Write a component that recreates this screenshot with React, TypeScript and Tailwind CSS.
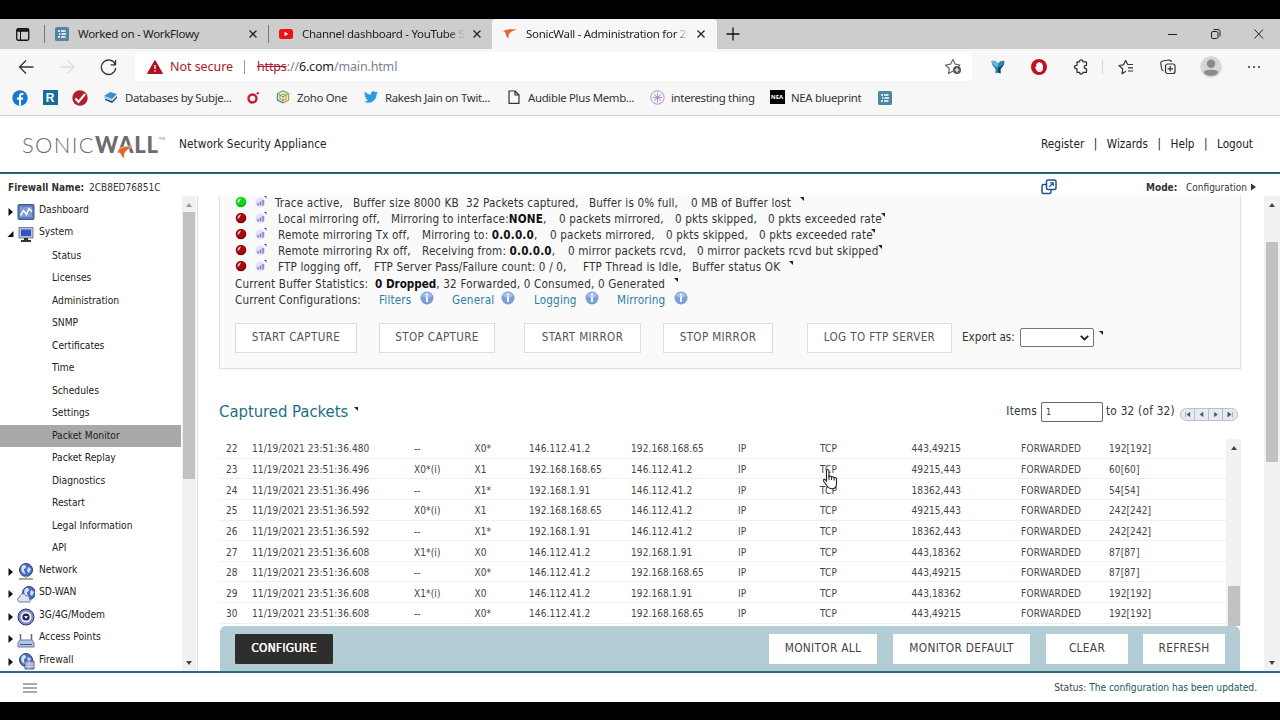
import type { ReactNode } from 'react'

/** Small folded-corner mark that flags a tooltip. */
function Tip({ className = '' }: { className?: string }) {
  return (
    <svg width="4" height="4" viewBox="0 0 4 4" className={`shrink-0 ${className}`} aria-hidden>
      <path d="M0 0h4v4z" fill="#222" />
    </svg>
  )
}

function Close() {
  return (
    <svg width="8" height="8" viewBox="0 0 8 8" stroke="#222" strokeWidth="1.3" className="shrink-0" aria-hidden>
      <path d="M.5.5l7 7M7.5.5l-7 7" />
    </svg>
  )
}

function WorkflowyIcon() {
  return (
    <svg width="14" height="14" viewBox="0 0 14 14" className="shrink-0" aria-hidden>
      <rect width="14" height="14" rx="1.5" fill="#4f87a3" />
      <path d="M3 4h2M6 4h4.500M4 7h1.500M6.500 7H11M3 10h2M6 10h4.500" stroke="#fff" strokeWidth="1.400" />
    </svg>
  )
}

function SonicSwoosh() {
  return (
    <svg width="14" height="10" viewBox="0 0 14 10" className="shrink-0" aria-hidden>
      <path d="M14 0.6C8-.4 2 .4 0 2.600c1.600 0 2.400.6 2.600 2.200.2 1.800 1.200 3.700 3.400 4.800C4.400 6 6.500 2.500 14 .6z" fill="#e0662d" />
    </svg>
  )
}

function TabStrip() {
  return (
    <div className="flex h-[30px] shrink-0 items-center bg-[#cdcdcd] text-[11.5px] tracking-[-0.3px] text-[#222]">
      <svg width="14" height="13" viewBox="0 0 14 13" className="ml-[16px]" fill="none" stroke="#111" aria-hidden>
        <rect x=".75" y=".75" width="12" height="11.500" rx="1.500" strokeWidth="1.300" />
        <path d="M1 2.500h12" strokeWidth="2.500" />
        <path d="M4.500 3v9" />
      </svg>
      <span className="ml-[14px] h-[18px] w-px bg-[#777]" />
      <span className="ml-[10px] flex">
        <WorkflowyIcon />
      </span>
      <span className="ml-[9px] w-[171px] whitespace-nowrap">Worked on - WorkFlowy</span>
      <Close />
      <span className="ml-[11px] h-[18px] w-px bg-[#777]" />
      <svg width="14" height="10" viewBox="0 0 14 10" className="ml-[10px] shrink-0" aria-hidden>
        <rect width="14" height="10" rx="2.500" fill="#e11" />
        <path d="M5.500 2.800v4.400L9.200 5z" fill="#fff" />
      </svg>
      <span className="ml-[9px] w-[163px] whitespace-nowrap [mask-image:linear-gradient(to_right,black_90%,transparent)]">
        Channel dashboard - YouTube St
      </span>
      <span className="ml-[8px] flex">
        <Close />
      </span>
      <div className="ml-[11px] flex h-[30px] w-[225px] items-center rounded-t-[4px] bg-[#f7f7f7] pl-[11px]">
        <SonicSwoosh />
        <span className="ml-[9px] w-[162px] whitespace-nowrap [mask-image:linear-gradient(to_right,black_92%,transparent)]">
          SonicWall - Administration for 20
        </span>
        <span className="ml-[9px] flex">
          <Close />
        </span>
      </div>
      <svg width="14" height="14" viewBox="0 0 14 14" stroke="#111" strokeWidth="1.300" className="ml-[9px]" aria-hidden>
        <path d="M7 .5v13M.5 7h13" />
      </svg>
      <svg width="97" height="12" viewBox="0 0 97 12" fill="none" stroke="#222" className="mr-[16px] ml-auto" aria-hidden>
        <path d="M1 6.500h9M87.500 1.500l8.500 9M96 1.500l-8.500 9" />
        <rect x="44.500" y="3.500" width="6.500" height="7" rx="1.500" />
        <path d="M46.500 1.500h4.500q2 0 2 2v5" />
      </svg>
    </div>
  )
}

function Toolbar() {
  return (
    <div className="flex h-[35px] shrink-0 items-center bg-[#f7f7f7]">
      <svg width="100" height="18" viewBox="0 0 100 18" fill="none" stroke="#333" strokeWidth="1.300" className="ml-[18px] shrink-0" aria-hidden>
        <path d="M15.500 9H1.500M8 2.500L1.500 9 8 15.500" />
        <path d="M42 9h14M49.500 2.500L56 9l-6.500 6.500" stroke="#ddd" />
        <path d="M97.200 6.500A7.200 7.200 0 1 0 97.700 10M97.500 2v4.800h-4.800" />
      </svg>
      <div className="ml-[17px] flex h-[29px] w-[837px] shrink-0 items-center rounded-[3px] bg-white pl-[12px]">
        <svg width="16" height="14" viewBox="0 0 16 14" aria-hidden>
          <path d="M8 .5l7.500 13H.5z" fill="#b01020" stroke="#b01020" strokeLinejoin="round" />
          <path d="M8 5v4M8 10.300v1.500" stroke="#fff" strokeWidth="1.300" />
        </svg>
        <span className="ml-[7px] w-[63px] pt-[2px] whitespace-nowrap text-[12.5px] tracking-[-0.05px] text-[#a8202c]">Not secure</span>
        <span className="ml-[11px] h-[14px] w-px bg-[#999]" />
        <span className="ml-[12px] pt-[2px] whitespace-nowrap text-[12.5px] tracking-[-0.15px] text-[#7a8290]">
          <span className="text-[#a8202c] line-through">https</span>://<span className="text-[#222]">6.com</span>/main.html
        </span>
        <svg width="18" height="17" viewBox="0 0 18 17" fill="none" stroke="#666" strokeWidth="1.200" className="mr-[10px] ml-auto" aria-hidden>
          <path d="M9 13l-4.500 2.500.8-5L1.500 7l5-.8L9 1.500l2.300 4.700 4.500.8-1.500 1.500" strokeLinejoin="round" />
          <circle cx="13" cy="12" r="4" fill="#555" stroke="none" />
          <path d="M13 9.800v4.400M10.800 12h4.400" stroke="#fff" />
        </svg>
      </div>
      <div className="flex flex-1 items-center">
        <svg width="14" height="14" viewBox="0 0 14 14" className="ml-[19px] shrink-0" aria-hidden>
          <path d="M.5 1C3 .2 5.500 1 7 3.800 8.500 1 11 .2 13.500 1 13.500 4 11.500 7 9.500 9v4.500L7 12.500l-2.500 1V9C2.500 7 .5 4 .5 1z" fill="#2786b8" />
          <path d="M.5 1C3 .2 5.500 1 7 3.800V7C4 7 1.500 4.500.5 1z" fill="#6db4d8" />
          <path d="M13.500 1C13 4.500 10 7.500 7 7.500v5l2.500 1V9c2-2 4-5 4-8z" fill="#173f63" />
        </svg>
        <svg width="16" height="16" viewBox="0 0 16 16" className="ml-[26px] shrink-0" aria-hidden>
          <circle cx="8" cy="8" r="8" fill="#c50f1f" />
          <path d="M4 7.500l1.300.8V4.500h1.300V3.400h1.400V3h1.400v1h1.500v1.500h1V9.500c0 2-1.200 3.500-3.300 3.500C6.300 13 5 11.500 4 7.500z" fill="#fff" />
        </svg>
        <svg width="16" height="16" viewBox="0 0 16 16" fill="none" stroke="#333" strokeWidth="1.300" className="ml-[26px] shrink-0" aria-hidden>
          <path d="M4 2.800h2.500c0-2.600 3.500-2.600 3.500 0h3.500v3.500c-3 0-3 3.600 0 3.600v3.400H10c0 2.400-3.500 2.400-3.500 0H4V9.900C.6 9.900.6 6.300 4 6.300z" strokeLinejoin="round" />
        </svg>
        <span className="ml-[13px] h-[14px] w-px bg-[#d5d5d5]" />
        <svg width="16" height="16" viewBox="0 0 16 16" fill="none" stroke="#333" strokeWidth="1.200" className="ml-[15px] shrink-0" aria-hidden>
          <path d="M8 12.300L4 14.800l.8-4.800L1 6.500l4.500-.7L7.700 1.500l2 4H15M10 8.800h5M10 12h5" strokeLinejoin="round" />
        </svg>
        <svg width="16" height="16" viewBox="0 0 16 16" fill="none" stroke="#333" strokeWidth="1.200" className="ml-[26px] shrink-0" aria-hidden>
          <rect x="5.500" y="5" width="9.500" height="9.500" rx="2" />
          <path d="M10.200 7v5.500M7.500 9.800H13M3.500 12Q2 11.500 1.700 10L.8 4.500Q.6 2.500 2.500 2L9 1q2 0 2.500 2" />
        </svg>
        <svg width="22" height="22" viewBox="0 0 22 22" className="ml-[24px] shrink-0" aria-hidden>
          <circle cx="11" cy="11" r="10.700" fill="#d8d6d4" />
          <circle cx="11" cy="7.800" r="4.200" fill="#8c8a88" />
          <path d="M4 16c0-3 14-3 14 0 0 5-14 5-14 0z" fill="#8c8a88" />
        </svg>
        <svg width="14" height="4" viewBox="0 0 14 4" fill="#333" className="ml-[25px] shrink-0" aria-hidden>
          <circle cx="2" cy="2" r="1" />
          <circle cx="7" cy="2" r="1" />
          <circle cx="12" cy="2" r="1" />
        </svg>
      </div>
    </div>
  )
}

function Bookmark({ icon, label, className }: { icon: ReactNode; label?: string; className: string }) {
  return (
    <div className={`flex shrink-0 items-center whitespace-nowrap ${className}`}>
      <span className="flex w-[16px] shrink-0 justify-center">{icon}</span>
      {label && <span className="ml-[6px] pt-px">{label}</span>}
    </div>
  )
}

function BookmarksBar() {
  return (
    <div className="flex h-[32px] shrink-0 items-center border-b border-[#cfcfcf] bg-[#f7f7f7] pb-[4px] pl-[12px] text-[11.4px] tracking-[-0.32px] text-[#333]">
      <Bookmark
        className="w-[30px]"
        icon={
          <svg width="16" height="16" viewBox="0 0 16 16" aria-hidden>
            <circle cx="8" cy="8" r="7.700" fill="#1877d2" />
            <path d="M7 15.500V9.800H5V7.600h2V6c0-2 1.200-3 3-3h1.300v2h-1C9.300 5 9 5.500 9 6.300v1.300h2.200l-.4 2.200H9v5.700z" fill="#fff" />
          </svg>
        }
      />
      <Bookmark
        className="w-[30px]"
        icon={
          <span className="flex h-[15px] w-[15px] items-center justify-center bg-[#156d9c] font-['Liberation_Sans',sans-serif] text-[12px] leading-none font-bold text-white">
            R
          </span>
        }
      />
      <Bookmark
        className="w-[31px]"
        icon={
          <svg width="16" height="16" viewBox="0 0 16 16" aria-hidden>
            <circle cx="8" cy="8" r="7.700" fill="#b31f30" />
            <path d="M3.500 8.500l3 3.500 6.500-8" stroke="#fff" strokeWidth="2" fill="none" />
          </svg>
        }
      />
      <Bookmark
        className="w-[142px]"
        label="Databases by Subje..."
        icon={
          <svg width="14" height="12" viewBox="0 0 14 12" aria-hidden>
            <path d="M0 5l6-4 7 2-5 5z" fill="#3f8fc6" />
            <path d="M1 7.500l7 2.500 5-5v2L8 12 1 9z" fill="#1e4f86" />
            <path d="M0 5l8 3v2L0 7z" fill="#a9d2ea" />
          </svg>
        }
      />
      <Bookmark
        className="w-[30px]"
        icon={
          <svg width="14" height="14" viewBox="0 0 14 14" aria-hidden>
            <circle cx="6.500" cy="7.500" r="4" fill="none" stroke="#c8203c" strokeWidth="2.400" />
            <circle cx="11.800" cy="2.300" r="1.200" fill="#c8203c" />
          </svg>
        }
      />
      <Bookmark
        className="w-[88px]"
        label="Zoho One"
        icon={
          <svg width="14" height="14" viewBox="0 0 14 14" fill="none" strokeWidth="1.300" aria-hidden>
            <path d="M1.500 3.500L7 1l5.500 2.500" stroke="#6cb04a" />
            <path d="M1.500 3.500v6.500L7 13" stroke="#2f87c8" />
            <path d="M12.500 3.500v6.500L7 13" stroke="#b9a33a" />
            <path d="M4 5.500l3-1.500 3 1.500v3.500L7 10.500 4 9z" stroke="#e0a030" />
            <path d="M1.500 3.500L7 6.800l5.500-3.300M7 6.800V13" stroke="#5aa05a" strokeWidth=".9" />
          </svg>
        }
      />
      <Bookmark
        className="w-[143px]"
        label="Rakesh Jain on Twit..."
        icon={
          <svg width="14" height="12" viewBox="0 0 24 20" fill="#2a9ddf" aria-hidden>
            <path d="M24 2.400a10 10 0 0 1-2.800.8A5 5 0 0 0 23.300.500a10 10 0 0 1-3.100 1.200 4.900 4.900 0 0 0-8.400 4.500A14 14 0 0 1 1.700 1a4.900 4.900 0 0 0 1.500 6.600A5 5 0 0 1 1 7v.1a4.900 4.900 0 0 0 3.900 4.800 5 5 0 0 1-2.200.1 4.900 4.900 0 0 0 4.600 3.400A9.900 9.900 0 0 1 0 17.500a14 14 0 0 0 7.500 2.200c9.100 0 14-7.500 14-14v-.6A10 10 0 0 0 24 2.400z" />
          </svg>
        }
      />
      <Bookmark
        className="w-[143px]"
        label="Audible Plus Memb..."
        icon={
          <svg width="12" height="14" viewBox="0 0 12 14" fill="none" stroke="#333" strokeWidth="1.200" aria-hidden>
            <path d="M1 1h6l4 4v8.400H1zM7 1v4h4" strokeLinejoin="round" />
          </svg>
        }
      />
      <Bookmark
        className="w-[120px]"
        label="interesting thing"
        icon={
          <svg width="15" height="15" viewBox="0 0 15 15" fill="none" stroke="#b48fcb" aria-hidden>
            <circle cx="7.500" cy="7.500" r="6.700" />
            <path d="M7.500 2.500v10M4 4.500l3.500 3 3.500-3M4 10.500l3.500-3 3.500 3M3 7.500h9" />
          </svg>
        }
      />
      <Bookmark
        className="w-[108px]"
        label="NEA blueprint"
        icon={
          <span className="flex h-[14px] w-[15px] items-center justify-center bg-black text-[6px] font-bold tracking-normal text-white">NEA</span>
        }
      />
      <Bookmark className="w-[20px]" icon={<WorkflowyIcon />} />
    </div>
  )
}

function PageHeader() {
  return (
    <div className="flex h-[58px] shrink-0 items-center border-b-2 border-[#1d6474] bg-white pt-[2px] text-[11.7px] text-[#222]">
      <div className="relative ml-[22px] flex w-[157px] items-center font-['Lato',sans-serif] text-[22px] leading-none text-[#6b6b6d]">
        <span className="w-[73px] font-light tracking-[1.3px]">SONIC</span>
        <span className="font-black tracking-[0.8px]">WALL</span>
        <span className="mb-[12px] text-[4px]">TM</span>
        <svg width="18" height="14" viewBox="0 0 18 14" className="absolute top-[11px] left-[94px]" aria-hidden>
          <path d="M17.500 1C10 .500 3 2.500 1 6.500c2 .2 3 1 3.500 2.500.600 2 2 3.500 4.500 4.500C7 9 9 5.500 17.500 1z" fill="#e0662d" stroke="#fff" strokeWidth=".6" />
        </svg>
      </div>
      <span className="whitespace-nowrap tracking-[0.08px]">Network Security Appliance</span>
      <div className="mr-[27px] ml-auto flex w-[212px] justify-between whitespace-nowrap">
        <span>Register</span>
        <span>|</span>
        <span>Wizards</span>
        <span>|</span>
        <span>Help</span>
        <span>|</span>
        <span>Logout</span>
      </div>
    </div>
  )
}

function ModeBar() {
  return (
    <div className="flex h-[22px] shrink-0 items-center pt-[4px] text-[10px] whitespace-nowrap text-[#333]">
      <span className="ml-[8px] w-[81px] font-bold">Firewall Name:</span>
      <span>2CB8ED76851C</span>
      <svg width="16" height="16" viewBox="0 0 16 16" fill="#fff" stroke="#214f9a" strokeWidth="1.500" className="ml-auto" aria-hidden>
        <rect x="1" y="5.500" width="9" height="9" rx="1.500" />
        <rect x="5.500" y="1" width="9.500" height="9.500" rx="1.500" />
        <path d="M8 8l4-4M9 3.700h3.300V7" strokeWidth="1.100" />
      </svg>
      <span className="ml-[89px] w-[40px] font-bold">Mode:</span>
      <span className="w-[65px]">Configuration</span>
      <svg width="6" height="8" viewBox="0 0 6 8" className="mr-[23px] shrink-0" aria-hidden>
        <path d="M0 .5l5 3.500-5 3.500z" fill="#333" />
      </svg>
    </div>
  )
}

function Globe() {
  return (
    <>
      <circle cx="9" cy="7" r="6.500" fill="#4a6fc4" stroke="#2c3f7c" />
      <path d="M5 3c2-2 4-1 4 1s-2 1-2 3 2 2 1 4C5 10 3 7 5 3zM11 4l3 2-2 4-2-2z" fill="#d5e2fa" />
    </>
  )
}

const NAV_ICONS: Record<string, ReactNode> = {
  Dashboard: (
    <>
      <rect x="1" y="1.500" width="16" height="15" rx="1" fill="#5d7fbd" stroke="#3c578f" />
      <path d="M3 4h12v10H3z" fill="#7f9dd2" />
      <path d="M3.500 12.500l3-5 3 4 2.500-6 3 3" stroke="#fff" strokeWidth="1.500" fill="none" />
    </>
  ),
  System: (
    <>
      <rect x="2" y="1.500" width="14" height="10.500" fill="#b8c2d6" stroke="#76809a" />
      <rect x="4" y="3.500" width="10" height="6.500" fill="#2d57c4" />
      <path d="M7 12h4v2h3v2H4v-2h3z" fill="#333" />
    </>
  ),
  Network: (
    <>
      <Globe />
      <path d="M8 13h2v2h6v2H2v-2h6z" fill="#a9ab98" />
    </>
  ),
  'SD-WAN': (
    <>
      <g transform="translate(3 0)">
        <Globe />
      </g>
      <path d="M3 16c-3 0-3-5 0-5 0-4 5-4 6-1 3-1 4 2 3 3 2 0 2 3 0 3z" fill="#dde5f2" stroke="#66759b" />
    </>
  ),
  '3G/4G/Modem': (
    <>
      <circle cx="9" cy="9" r="8" fill="#7c89c4" stroke="#2f3a70" />
      <circle cx="9" cy="9" r="5.500" fill="#e8ecf8" />
      <circle cx="9" cy="9" r="3.600" fill="#20274f" />
      <path d="M7 8h4l-2 3z" fill="#eee" />
    </>
  ),
  'Access Points': (
    <>
      <path d="M3.500 3v8M14.500 3v8" stroke="#5b6791" strokeWidth="1.500" />
      <path d="M1 12l2-3h12l2 3v4H1z" fill="#b5c4e6" stroke="#6a78a5" />
      <path d="M3 13.500h12" stroke="#42518a" />
    </>
  ),
  Firewall: (
    <>
      <Globe />
      <path d="M8 8h9v8H8z" fill="#9aa8cf" stroke="#505f93" />
      <path d="M8 11h9M8 13.500h9M12 8v8" stroke="#dfe5f5" strokeWidth=".7" />
    </>
  ),
}

function NavGroup({ label, open }: { label: string; open?: boolean }) {
  return (
    <div className="flex h-[22.5px] shrink-0 items-center">
      <svg width="7" height="8" viewBox="0 0 7 8" className="mt-[2px] ml-[7px] shrink-0" aria-hidden>
        <path d={open ? 'M6.500 1v6H.5z' : 'M1.500 0l4.500 4-4.500 4z'} fill="#111" />
      </svg>
      <svg width="18" height="18" viewBox="0 0 18 18" className="mt-[3px] ml-[3px] shrink-0" aria-hidden>
        {NAV_ICONS[label]}
      </svg>
      <span className="mb-[3px] ml-[4px]">{label}</span>
    </div>
  )
}

const SYSTEM_ITEMS = [
  'Status',
  'Licenses',
  'Administration',
  'SNMP',
  'Certificates',
  'Time',
  'Schedules',
  'Settings',
  'Packet Monitor',
  'Packet Replay',
  'Diagnostics',
  'Restart',
  'Legal Information',
  'API',
]

function Arrow({ down, color = '#444' }: { down?: boolean; color?: string }) {
  return (
    <svg width="8" height="4" viewBox="0 0 8 4" className="shrink-0" aria-hidden>
      <path d={down ? 'M1 0h6L4 4z' : 'M1 4h6L4 0z'} fill={color} />
    </svg>
  )
}

function Sidebar() {
  return (
    <div className="flex w-[198px] shrink-0 border-r border-[#dcdcdc]">
      <div className="flex h-full w-[181px] flex-col overflow-hidden pt-[3.5px] text-[10.2px] whitespace-nowrap text-[#222]">
        <NavGroup label="Dashboard" />
        <NavGroup label="System" open />
        {SYSTEM_ITEMS.map((item) => (
          <div
            key={item}
            className={`flex h-[22.5px] shrink-0 items-center pb-px pl-[52px] ${item === 'Packet Monitor' ? 'bg-[#a9a9a9]' : ''}`}
          >
            {item}
          </div>
        ))}
        <NavGroup label="Network" />
        <NavGroup label="SD-WAN" />
        <NavGroup label="3G/4G/Modem" />
        <NavGroup label="Access Points" />
        <NavGroup label="Firewall" />
      </div>
      <div className="ml-px flex w-[14px] flex-col items-center bg-[#f1f1f1] pt-[7px]">
        <Arrow color="#999" />
        <div className="mt-[5px] h-[267px] w-[12px] bg-[#c1c1c1]" />
        <div className="mt-auto mb-[6px] flex">
          <Arrow down />
        </div>
      </div>
    </div>
  )
}

function Led({ on }: { on?: boolean }) {
  return (
    <svg width="12" height="12" viewBox="0 0 12 12" className="shrink-0" aria-hidden>
      <circle cx="6" cy="6" r="5.300" fill={on ? '#12d51c' : '#a80812'} />
      <path d="M2.500 6c0-2 1.500-3.500 3.500-3.500L3.500 7z" fill={on ? '#d8ffd8' : '#f3c3c3'} />
      <path d="M3 9.500c3 1.500 6 0 7.500-3" stroke={on ? '#0a8f14' : '#5d0208'} fill="none" />
    </svg>
  )
}

function StatsIcon() {
  return (
    <svg width="12" height="12" viewBox="0 0 12 12" className="ml-[8px] shrink-0" aria-hidden>
      <circle cx="5.500" cy="6.500" r="5" fill="#e1e1f8" />
      <path d="M3 7v2.500M5.500 5.500v4M8 4v5.500" stroke="#7b80d0" strokeWidth="1.500" />
      <path d="M9 0h2.500v2.500z" fill="#555" />
    </svg>
  )
}

type Segment = [text: string, width: string, bold?: string]

const STATUS_LINES: { on?: boolean; indent: string; segments: Segment[] }[] = [
  {
    on: true,
    indent: 'ml-[8px]',
    segments: [
      ['Trace active,', 'w-[78px]'],
      ['Buffer size 8000 KB', 'w-[113px]'],
      ['32 Packets captured,', 'w-[123px]'],
      ['Buffer is 0% full,', 'w-[102px]'],
      ['0 MB of Buffer lost', 'w-[119px]'],
    ],
  },
  {
    indent: 'ml-[11px]',
    segments: [
      ['Local mirroring off,', 'w-[113px]'],
      ['Mirroring to interface:', 'w-[168px]', 'NONE'],
      ['0 packets mirrored,', 'w-[116px]'],
      ['0 pkts skipped,', 'w-[93px]'],
      ['0 pkts exceeded rate', 'w-[123px]'],
    ],
  },
  {
    indent: 'ml-[11px]',
    segments: [
      ['Remote mirroring Tx off,', 'w-[144px]'],
      ['Mirroring to: ', 'w-[128px]', '0.0.0.0'],
      ['0 packets mirrored,', 'w-[116px]'],
      ['0 pkts skipped,', 'w-[93px]'],
      ['0 pkts exceeded rate', 'w-[122px]'],
    ],
  },
  {
    indent: 'ml-[11px]',
    segments: [
      ['Remote mirroring Rx off,', 'w-[144px]'],
      ['Receiving from: ', 'w-[146px]', '0.0.0.0'],
      ['0 mirror packets rcvd,', 'w-[129px]'],
      ['0 mirror packets rcvd but skipped', 'w-[191px]'],
    ],
  },
  {
    indent: 'ml-[11px]',
    segments: [
      ['FTP logging off,', 'w-[96px]'],
      ['FTP Server Pass/Failure count: 0 / 0,', 'w-[209px]'],
      ['FTP Thread is Idle,', 'w-[109px]'],
      ['Buffer status OK', 'w-[107px]'],
    ],
  },
]

function Info({ className }: { className: string }) {
  return (
    <svg width="14" height="14" viewBox="0 0 14 14" className={`mb-[7px] shrink-0 ${className}`} aria-hidden>
      <circle cx="7" cy="7" r="6.500" fill="#7f9ed8" />
      <path d="M2 5a5.300 5.300 0 0 1 10 0c-3 2-7 2-10 0z" fill="#a9c0ea" />
      <path d="M7 2.500v2M7 5.500v5.500" stroke="#fff" strokeWidth="1.800" />
    </svg>
  )
}

function PanelButton({ children, className }: { children: string; className: string }) {
  return (
    <button className={`flex h-[30px] shrink-0 items-center justify-center whitespace-nowrap ${className}`}>{children}</button>
  )
}

function CapturePanel() {
  return (
    <div className="h-[173px] shrink-0 border border-t-0 border-[#e2e2e2] bg-[#fafafa] pl-[15px] text-[11.6px] tracking-[0.17px] text-[#333] shadow-xs">
      <div className="flex flex-col">
        {STATUS_LINES.map((line, i) => (
          <div key={i} className="flex h-[16px] items-center whitespace-nowrap">
            <span className="mb-[5px] flex">
              <Led on={line.on} />
              <StatsIcon />
            </span>
            <span className={line.indent} />
            {line.segments.map(([text, width, bold]) => (
              <span key={text} className={`shrink-0 whitespace-pre ${width}`}>
                {text}
                {bold && (
                  <>
                    <b className="text-[#111]">{bold}</b>,
                  </>
                )}
              </span>
            ))}
            <Tip className="mb-[10px] -ml-[10px]" />
          </div>
        ))}
        <div className="flex h-[17px] items-center whitespace-nowrap">
          <span className="w-[140px]">Current Buffer Statistics:</span>
          <b className="tracking-normal text-[#111]">0 Dropped</b>
          <span>, 32 Forwarded, 0 Consumed, 0 Generated</span>
          <Tip className="mb-[10px] ml-[9px]" />
        </div>
        <div className="flex h-[16px] items-center whitespace-nowrap text-[#2a7fa3]">
          <span className="w-[144px] text-[#333]">Current Configurations:</span>
          <span className="w-[41px]">Filters</span>
          <Info className="mr-[18px]" />
          <span className="w-[49px]">General</span>
          <Info className="mr-[19px]" />
          <span className="w-[51px]">Logging</span>
          <Info className="mr-[18px]" />
          <span className="w-[57px]">Mirroring</span>
          <Info className="" />
        </div>
      </div>
      <div className="mt-[14px] flex items-center text-[#555]">
        <PanelButton className="w-[122px] border border-[#ddd] bg-white tracking-[0.35px]">START CAPTURE</PanelButton>
        <PanelButton className="ml-[22px] w-[116px] border border-[#ddd] bg-white tracking-[0.35px]">STOP CAPTURE</PanelButton>
        <PanelButton className="ml-[29px] w-[117px] border border-[#ddd] bg-white tracking-[0.35px]">START MIRROR</PanelButton>
        <PanelButton className="ml-[22px] w-[110px] border border-[#ddd] bg-white tracking-[0.35px]">STOP MIRROR</PanelButton>
        <PanelButton className="ml-[34px] w-[145px] border border-[#ddd] bg-white tracking-[0.35px]">LOG TO FTP SERVER</PanelButton>
        <span className="ml-[10px] w-[58px] whitespace-nowrap tracking-normal text-[#333]">Export as:</span>
        <div className="mb-px flex h-[19px] w-[74px] items-center justify-end rounded-[2px] border border-[#767676] bg-white pr-[4px]">
          <svg width="9" height="6" viewBox="0 0 9 6" fill="none" stroke="#222" strokeWidth="1.900" aria-hidden>
            <path d="M.8.8L4.500 4.500 8.200.8" />
          </svg>
        </div>
        <Tip className="mb-[10px] ml-[5px]" />
      </div>
    </div>
  )
}

const PAGER = ['M4 1v5M9 1L5.500 3.500 9 6z', 'M8 1L4.500 3.500 8 6z', 'M5 1l3.500 2.500L5 6z', 'M9 1v5M4 1l3.500 2.500L4 6z']

function CapturedHeading() {
  return (
    <div className="mt-[32px] flex h-[22px] shrink-0 items-center whitespace-nowrap text-[#333]">
      <h2 className="text-[16.6px] tracking-[-0.05px] text-[#1f6f86]">Captured Packets</h2>
      <Tip className="mb-[7px] ml-[6px]" />
      <span className="mr-[4px] ml-auto text-[11.7px] tracking-[0.25px]">Items</span>
      <div className="flex h-[20px] w-[62px] items-center rounded-[2px] border border-[#666] bg-white pt-px pl-[4px] text-[9px]">1</div>
      <span className="ml-[3px] w-[74px] text-[11.7px] tracking-[0.25px]">to 32 (of 32)</span>
      <div className="mt-[4px] mr-[3px] flex h-[13px] w-[58px] overflow-hidden rounded-full border border-[#b9c0c8] bg-[#e6ebf1]">
        {PAGER.map((d) => (
          <svg key={d} width="14.500" height="11" viewBox="-1 -2 14.500 11" className="border-r border-[#b9c0c8] last:border-r-0" fill="#4a5566" stroke="#4a5566" strokeWidth=".5" aria-hidden>
            <path d={d} />
          </svg>
        ))}
      </div>
    </div>
  )
}

const PACKETS = [
  ['22', '480', '--', 'X0*', '146.112.41.2', '192.168.168.65', '443,49215', '192[192]'],
  ['23', '496', 'X0*(i)', 'X1', '192.168.168.65', '146.112.41.2', '49215,443', '60[60]'],
  ['24', '496', '--', 'X1*', '192.168.1.91', '146.112.41.2', '18362,443', '54[54]'],
  ['25', '592', 'X0*(i)', 'X1', '192.168.168.65', '146.112.41.2', '49215,443', '242[242]'],
  ['26', '592', '--', 'X1*', '192.168.1.91', '146.112.41.2', '18362,443', '242[242]'],
  ['27', '608', 'X1*(i)', 'X0', '146.112.41.2', '192.168.1.91', '443,18362', '87[87]'],
  ['28', '608', '--', 'X0*', '146.112.41.2', '192.168.168.65', '443,49215', '87[87]'],
  ['29', '608', 'X1*(i)', 'X0', '146.112.41.2', '192.168.1.91', '443,18362', '192[192]'],
  ['30', '608', '--', 'X0*', '146.112.41.2', '192.168.168.65', '443,49215', '192[192]'],
]

function PacketTable() {
  return (
    <div className="relative mt-[15px] flex h-[188px] shrink-0">
      <div className="flex-1 text-[10px] tracking-[0.1px] text-[#444]">
        {PACKETS.map(([id, ms, ingress, egress, src, dst, ports, size]) => (
          <div
            key={id}
            className="grid h-[20.65px] grid-cols-[26px_162px_60.5px_54.5px_102px_107px_82px_91.5px_109.5px_88px_1fr] items-center border-b border-[#efefef] pt-[2px] pl-[7px] whitespace-nowrap"
          >
            <span>{id}</span>
            <span>11/19/2021 23:51:36.{ms}</span>
            <span>{ingress}</span>
            <span>{egress}</span>
            <span>{src}</span>
            <span>{dst}</span>
            <span>IP</span>
            <span>TCP</span>
            <span>{ports}</span>
            <span className="tracking-[0.2px]">FORWARDED</span>
            <span>{size}</span>
          </div>
        ))}
      </div>
      <div className="mt-[1px] flex w-[15px] flex-col items-center bg-[#f1f1f1] pt-[7px]">
        <Arrow />
        <div className="mt-auto h-[40px] w-[12px] bg-[#c1c1c1]" />
      </div>
      {/* hand pointer over row 23 */}
      <svg width="18" height="22" viewBox="0 0 18 22" className="absolute top-[30px] left-[603px]" aria-hidden>
        <path
          d="M5.500 1.500c1.200 0 1.500.7 1.500 1.500v5.500c.8-.8 2.300-.5 2.600.5.800-.6 2.200-.3 2.500.7.900-.5 2.400 0 2.400 1.500v4.500c0 3-1.500 5-4.500 5-3 0-4-1-5.500-3.500L1.500 13c-.6-1.300.8-2.200 1.800-1.200L4.500 13V3c0-.8.200-1.500 1-1.500z"
          fill="#fff"
          stroke="#222"
          strokeWidth="1.100"
        />
        <path d="M7 8v4M9.600 9v3M12.100 9.500v3" stroke="#222" fill="none" />
      </svg>
    </div>
  )
}

function ActionBar() {
  return (
    <div className="mx-px flex h-[45px] shrink-0 items-center rounded-t-[6px] bg-[#b3cdd5] pr-[15px] pl-[15px] text-[11.800px] tracking-[0.3px] text-[#444]">
      <PanelButton className="w-[98px] rounded-[1px] bg-[#2e2e2e] pt-px text-white [text-shadow:0.4px_0_0_white]">CONFIGURE</PanelButton>
      <PanelButton className="ml-auto w-[108px] bg-white pt-px">MONITOR ALL</PanelButton>
      <PanelButton className="ml-[16px] w-[137px] bg-white pt-px">MONITOR DEFAULT</PanelButton>
      <PanelButton className="ml-[16px] w-[82px] bg-white pt-px">CLEAR</PanelButton>
      <PanelButton className="ml-[15px] w-[82px] bg-white pt-px">REFRESH</PanelButton>
    </div>
  )
}

function Content() {
  return (
    <div className="flex flex-1">
      <div className="ml-[21px] flex w-[1022px] flex-col">
        <CapturePanel />
        <CapturedHeading />
        <PacketTable />
        <ActionBar />
      </div>
      <div className="ml-auto flex w-[16px] flex-col items-center bg-[#f1f1f1] pt-[7px]">
        <Arrow />
        <div className="mt-[35px] h-[220px] w-[12px] bg-[#c1c1c1]" />
        <div className="mt-auto mb-[6px] flex">
          <Arrow down />
        </div>
      </div>
    </div>
  )
}

export default function App() {
  return (
    <div className="flex h-[720px] w-[1280px] flex-col overflow-hidden bg-black py-[18px] pt-[19px]">
      <div className="flex shrink-0 flex-col font-['Noto_Sans','Open_Sans',sans-serif]">
        <TabStrip />
        <Toolbar />
        <BookmarksBar />
      </div>
      <div className="flex min-h-0 flex-1 flex-col bg-white font-['DejaVu_Sans_Condensed','DejaVu_Sans',sans-serif] [font-stretch:condensed]">
        <PageHeader />
        <ModeBar />
        <div className="flex h-[475px] shrink-0 overflow-hidden">
          <Sidebar />
          <Content />
        </div>
        <div className="flex flex-1 items-center border-t-2 border-[#2b6b80] pt-px pl-[23px] text-[10.2px] tracking-[-0.05px] text-[#444]">
          <svg width="14" height="10" viewBox="0 0 14 10" stroke="#555" aria-hidden>
            <path d="M0 1h14M0 5h14M0 9h14" strokeWidth="1.200" />
          </svg>
          <span className="mr-[23px] ml-auto whitespace-nowrap">
            Status: <span className="text-[#1c5a5c]">The configuration has been updated.</span>
          </span>
        </div>
      </div>
    </div>
  )
}
